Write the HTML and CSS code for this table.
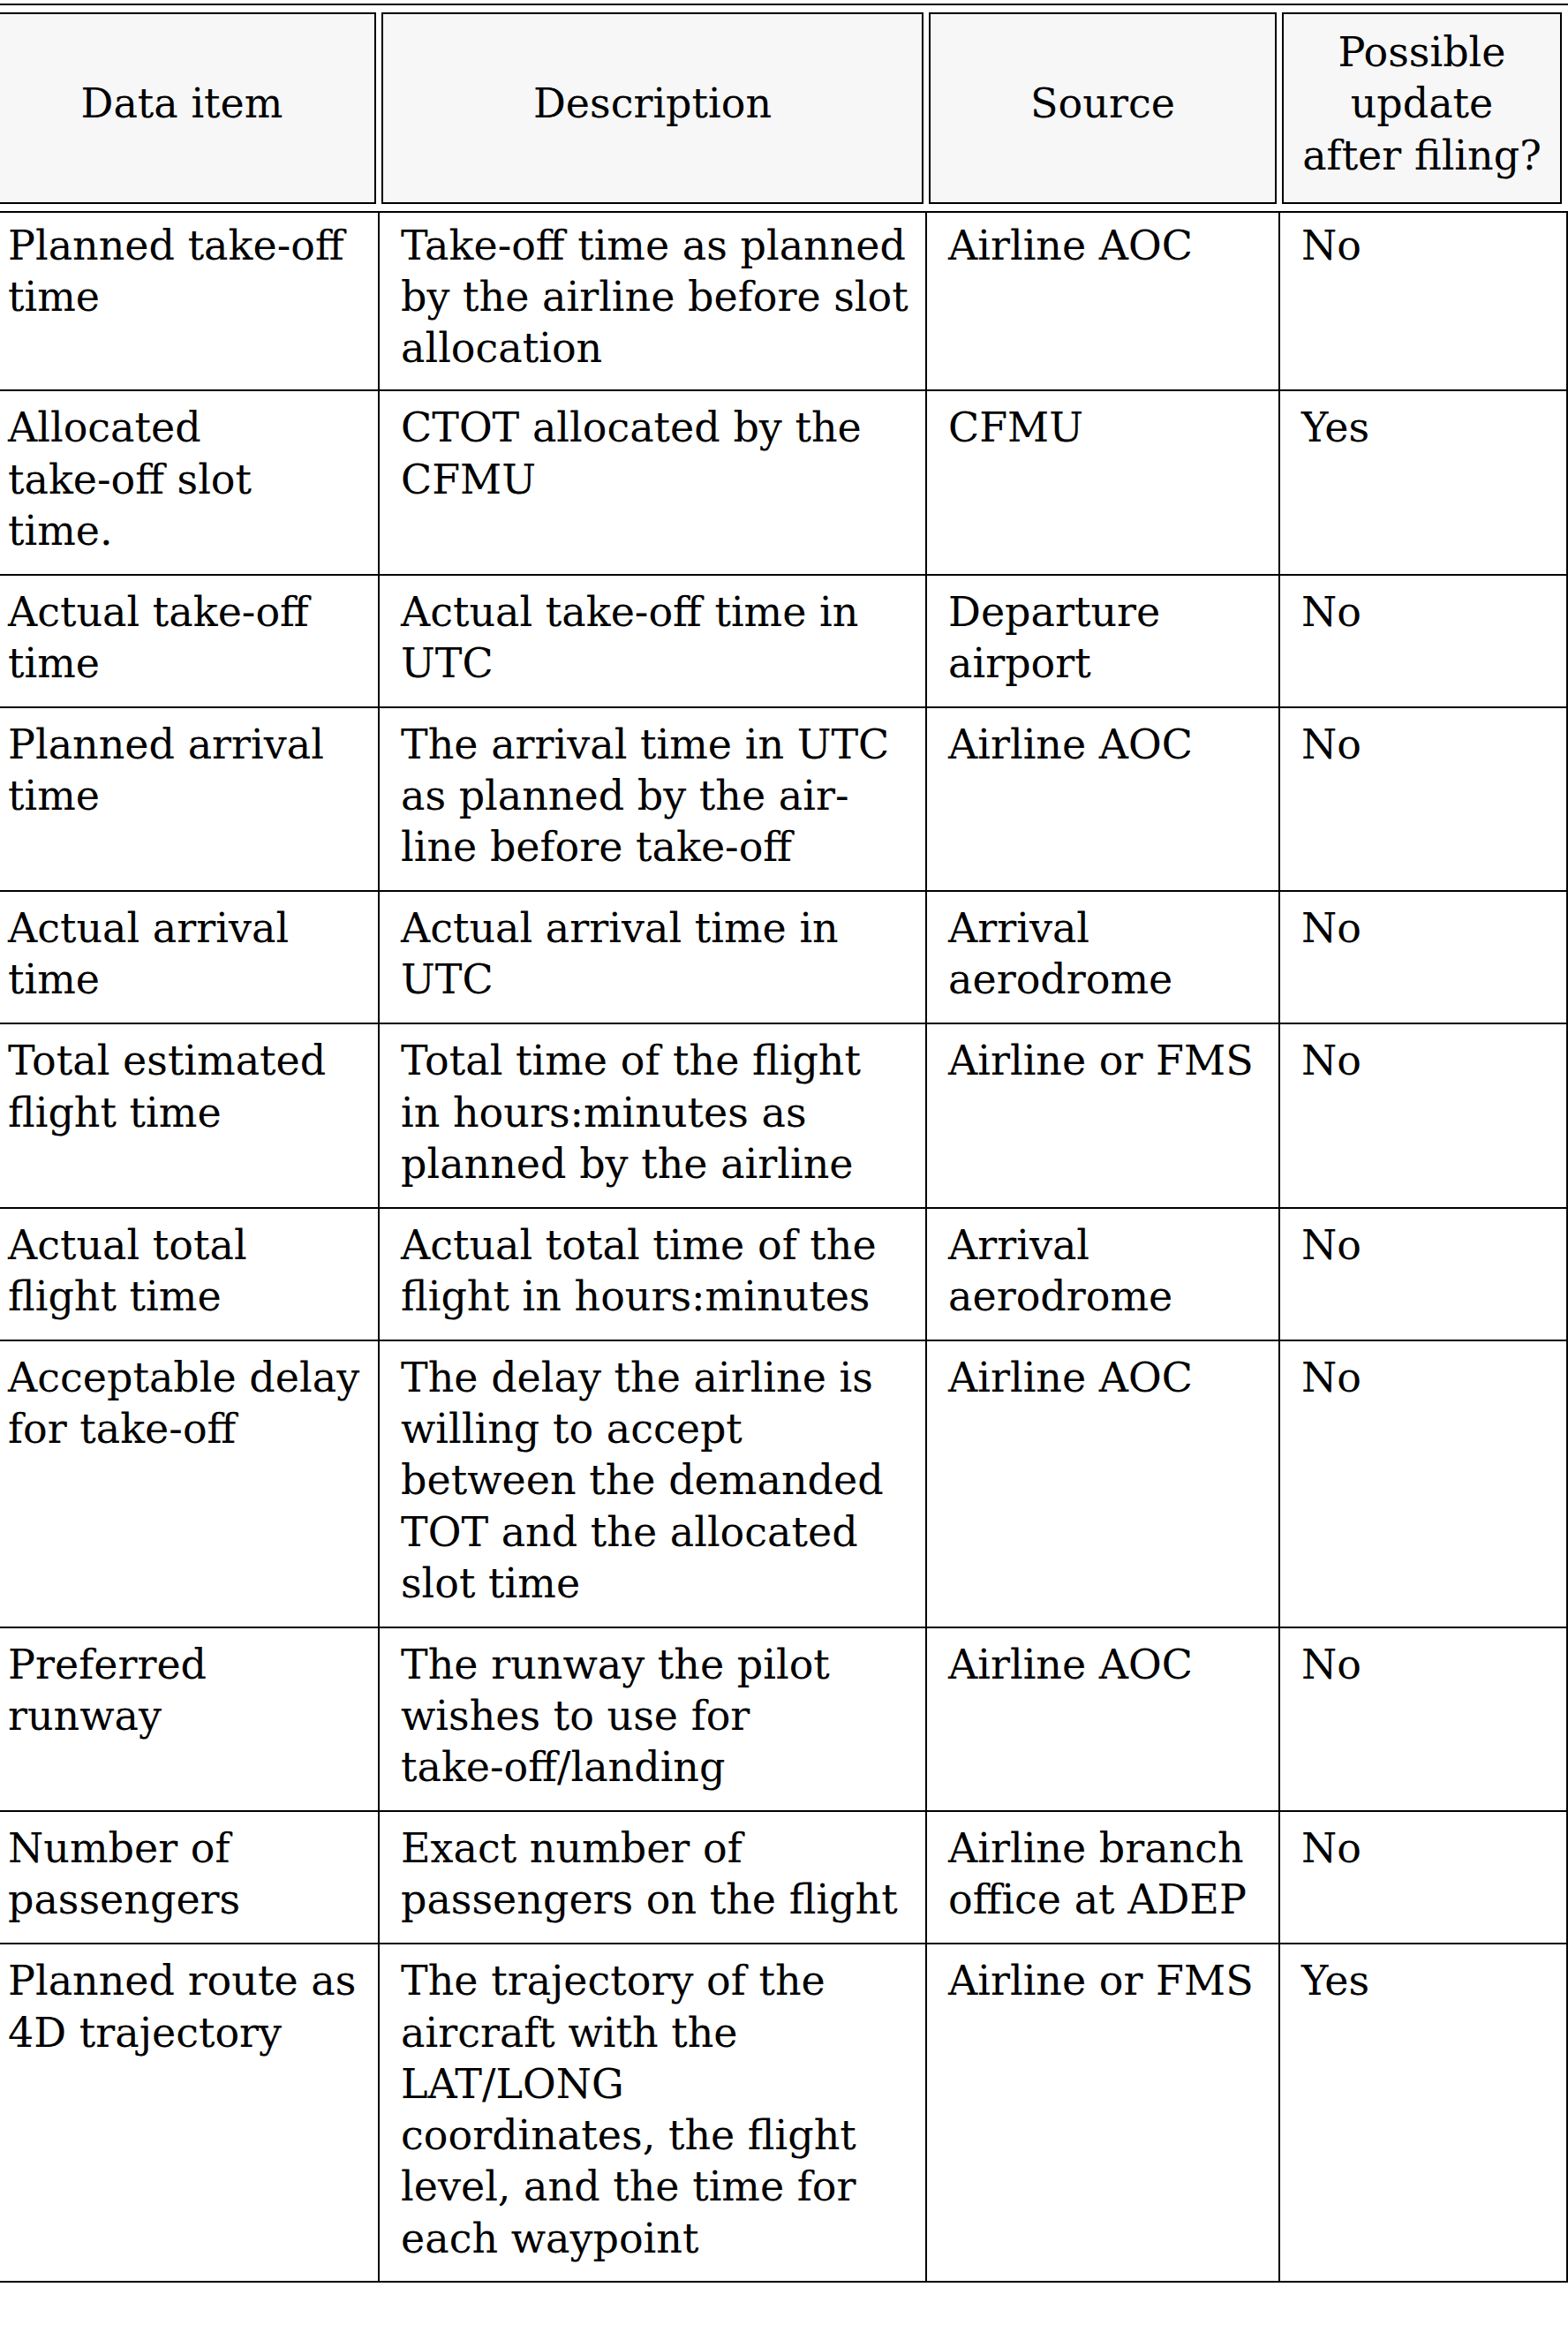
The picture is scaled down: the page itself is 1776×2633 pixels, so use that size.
FILE: index.html
```html
<!DOCTYPE html>
<html lang="en">
<head>
<meta charset="utf-8">
<title>Flight data items</title>
<link rel="stylesheet" href="styles.css">
</head>
<body>
<div class="rule"></div>
<div class="head">
  <div class="hcell first"><p>Data item</p></div>
  <div class="hcell"><p>Description</p></div>
  <div class="hcell"><p>Source</p></div>
  <div class="hcell"><p>Possible<br>update<br>after filing?</p></div>
</div>
<div class="grid">
  <div class="cell c1 r1">Planned take-off<br>time</div>
  <div class="cell c2 r1">Take-off time as planned<br>by the airline before slot<br>allocation</div>
  <div class="cell c3 r1">Airline AOC</div>
  <div class="cell c4 r1">No</div>

  <div class="cell c1">Allocated<br>take-off slot<br>time.</div>
  <div class="cell c2">CTOT allocated by the<br>CFMU</div>
  <div class="cell c3">CFMU</div>
  <div class="cell c4">Yes</div>

  <div class="cell c1">Actual take-off<br>time</div>
  <div class="cell c2">Actual take-off time in<br>UTC</div>
  <div class="cell c3">Departure<br>airport</div>
  <div class="cell c4">No</div>

  <div class="cell c1">Planned arrival<br>time</div>
  <div class="cell c2">The arrival time in UTC<br>as planned by the air-<br>line before take-off</div>
  <div class="cell c3">Airline AOC</div>
  <div class="cell c4">No</div>

  <div class="cell c1">Actual arrival<br>time</div>
  <div class="cell c2">Actual arrival time in<br>UTC</div>
  <div class="cell c3">Arrival<br>aerodrome</div>
  <div class="cell c4">No</div>

  <div class="cell c1">Total estimated<br>flight time</div>
  <div class="cell c2">Total time of the flight<br>in hours:minutes as<br>planned by the airline</div>
  <div class="cell c3">Airline or FMS</div>
  <div class="cell c4">No</div>

  <div class="cell c1">Actual total<br>flight time</div>
  <div class="cell c2">Actual total time of the<br>flight in hours:minutes</div>
  <div class="cell c3">Arrival<br>aerodrome</div>
  <div class="cell c4">No</div>

  <div class="cell c1">Acceptable delay<br>for take-off</div>
  <div class="cell c2">The delay the airline is<br>willing to accept<br>between the demanded<br>TOT and the allocated<br>slot time</div>
  <div class="cell c3">Airline AOC</div>
  <div class="cell c4">No</div>

  <div class="cell c1">Preferred<br>runway</div>
  <div class="cell c2">The runway the pilot<br>wishes to use for<br>take-off/landing</div>
  <div class="cell c3">Airline AOC</div>
  <div class="cell c4">No</div>

  <div class="cell c1">Number of<br>passengers</div>
  <div class="cell c2">Exact number of<br>passengers on the flight</div>
  <div class="cell c3">Airline branch<br>office at ADEP</div>
  <div class="cell c4">No</div>

  <div class="cell c1 last">Planned route as<br>4D trajectory</div>
  <div class="cell c2 last">The trajectory of the<br>aircraft with the<br>LAT/LONG<br>coordinates, the flight<br>level, and the time for<br>each waypoint</div>
  <div class="cell c3 last">Airline or FMS</div>
  <div class="cell c4 last">Yes</div>
</div>
</body>
</html>
```
FILE: styles.css
```css
html, body {
  margin: 0;
  padding: 0;
  background: #ffffff;
}

body {
  width: 1776px;
  font-family: "DejaVu Serif", "Liberation Serif", serif;
  font-size: 46px;
  line-height: 58.3px;
  color: #000000;
}

.rule {
  margin-top: 4px;
  height: 2px;
  background: #000000;
}

.head {
  margin-top: 8px;
  display: grid;
  grid-template-columns: 426px 614px 394px 317px;
  column-gap: 6px;
}

.hcell {
  display: flex;
  align-items: center;
  justify-content: center;
  text-align: center;
  background: #f7f7f7;
  border: 2px solid #000000;
  padding: 14px 10px 14px 10px;
  white-space: nowrap;
}

.hcell p {
  margin: 0 0 10px 0;
}

.hcell.first {
  border-left: none;
  padding-left: 0;
  padding-right: 12px;
}

.grid {
  margin-top: 8px;
  display: grid;
  grid-template-columns: 428px 620px 400px 328px;
}

.cell {
  border-top: 2px solid #000000;
  padding: 12px 10px 19.5px 24px;
  white-space: nowrap;
}

.cell.c1 {
  padding-left: 9px;
}

.cell.c2,
.cell.c3,
.cell.c4 {
  border-left: 2px solid #000000;
}

.cell.c4 {
  border-right: 2px solid #000000;
}

.cell.r1 {
  padding-top: 8px;
  padding-bottom: 17.5px;
}

.cell.last {
  border-bottom: 2px solid #000000;
}
```
